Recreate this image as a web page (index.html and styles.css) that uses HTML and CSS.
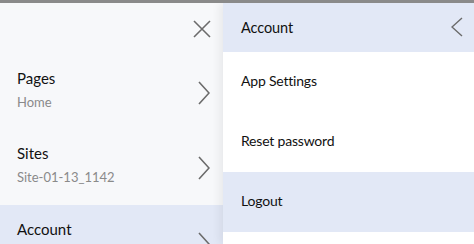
FILE: index.html
```html
<!DOCTYPE html>
<html lang="en">
<head>
    <meta charset="UTF-8">
    <meta name="viewport" content="width=device-width, initial-scale=1.0">
    <title>Menu</title>
    <link rel="stylesheet" href="styles.css">
</head>
<body>
    <div class="topbar"></div>
    <div class="panels">
        <div class="side">
            <div class="side-head">
                <svg class="icon-close" width="18" height="18" viewBox="0 0 18 18">
                    <path d="M1 1 L17 17 M17 1 L1 17" stroke="#6b6b6b" stroke-width="1.6" fill="none"/>
                </svg>
            </div>
            <div class="side-item">
                <div class="label">
                    <div class="title">Pages</div>
                    <div class="sub">Home</div>
                </div>
                <svg class="chev" width="12" height="24" viewBox="0 0 12 24">
                    <path d="M1 1 L11 12 L1 23" stroke="#6b6b6b" stroke-width="1.6" fill="none"/>
                </svg>
            </div>
            <div class="side-item">
                <div class="label">
                    <div class="title">Sites</div>
                    <div class="sub">Site-01-13_1142</div>
                </div>
                <svg class="chev" width="12" height="24" viewBox="0 0 12 24">
                    <path d="M1 1 L11 12 L1 23" stroke="#6b6b6b" stroke-width="1.6" fill="none"/>
                </svg>
            </div>
            <div class="side-item active">
                <div class="label">
                    <div class="title">Account</div>
                    <div class="sub">&nbsp;</div>
                </div>
                <svg class="chev" width="12" height="24" viewBox="0 0 12 24">
                    <path d="M1 1 L11 12 L1 23" stroke="#6b6b6b" stroke-width="1.6" fill="none"/>
                </svg>
            </div>
        </div>
        <div class="sub-panel">
            <div class="sub-head">
                <span>Account</span>
                <svg class="back" width="12" height="20" viewBox="0 0 12 20">
                    <path d="M11 1 L1 10 L11 19" stroke="#6b6b6b" stroke-width="1.4" fill="none"/>
                </svg>
            </div>
            <div class="sub-item">App Settings</div>
            <div class="sub-item">Reset password</div>
            <div class="sub-item active">Logout</div>
        </div>
    </div>
</body>
</html>
```

FILE: styles.css
```css
body {
    margin: 0;
    padding: 0;
    font-family: "Lato", "Liberation Sans", sans-serif;
    color: #111;
    background-color: #fff;
    height: 244px;
    overflow: hidden;
}
.topbar {
    height: 3px;
    background-color: #8a8a8a;
}
.panels {
    display: flex;
    height: 241px;
    overflow: hidden;
}
.side {
    width: 223px;
    background-color: #f7f8fa;
    flex-shrink: 0;
    overflow: hidden;
}
.side-head {
    height: 52px;
    display: flex;
    justify-content: flex-end;
    align-items: center;
    padding-right: 12px;
}
.side-item {
    height: 75px;
    display: flex;
    align-items: center;
    justify-content: space-between;
    padding: 0 13px 0 17px;
    box-sizing: border-box;
}
.side-item .label {
    margin-top: -6px;
}
.side-item.active {
    background-color: #e2e8f6;
    align-items: flex-start;
    padding-top: 14px;
}
.side-item.active .label {
    margin-top: 0;
}
.side-item.active .chev {
    margin-top: 13px;
}
.title {
    font-size: 15px;
    line-height: 20px;
}
.sub {
    font-size: 13px;
    color: #8a8a8a;
    margin-top: 5px;
    line-height: 18px;
}
.sub-panel {
    flex-grow: 1;
    background-color: #fff;
    box-shadow: -4px 0 8px rgba(0, 0, 0, 0.06);
    position: relative;
}
.sub-head {
    height: 49px;
    background-color: #e2e8f6;
    display: flex;
    align-items: center;
    justify-content: space-between;
    padding: 0 11px 0 18px;
    font-size: 14.5px;
    letter-spacing: -0.1px;
}
.back {
    margin-top: -2px;
}
.sub-item {
    height: 60px;
    display: flex;
    align-items: center;
    padding-left: 18px;
    padding-bottom: 3px;
    box-sizing: border-box;
    font-size: 14px;
    letter-spacing: -0.2px;
}
.sub-item.active {
    background-color: #e2e8f6;
}
```
